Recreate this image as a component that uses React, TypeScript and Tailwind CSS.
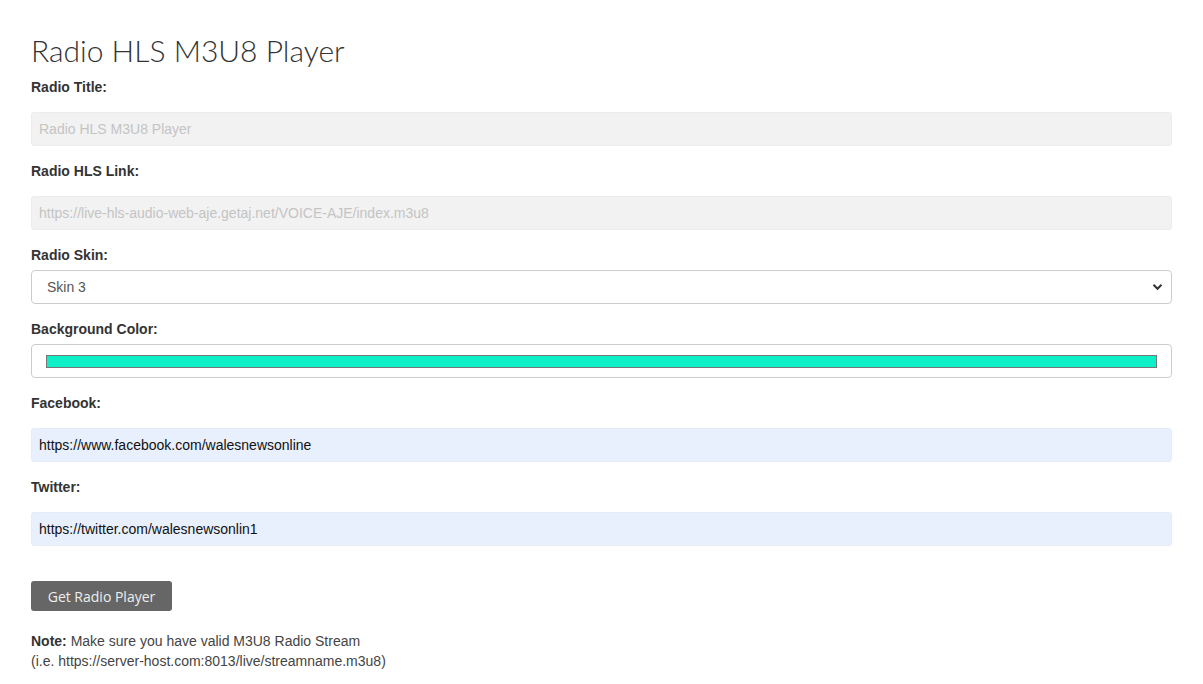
import React from "react";

const labelCls =
  "block text-[14px] leading-[18px] font-bold text-[#333] [font-family:'Liberation_Sans',Arial,sans-serif]";
const sans = "[font-family:'Liberation_Sans',Arial,sans-serif]";

export default function App() {
  return (
    <div className={`min-h-[684px] bg-white ${sans}`}>
      <div className="mx-[31px] pt-[30px]">
        <h1 className="text-[30px] leading-[40px] font-light text-[#333] [font-family:Lato,'Open_Sans',sans-serif]">
          Radio HLS M3U8 Player
        </h1>

        <label className={`${labelCls} mt-[8px]`}>Radio Title:</label>
        <div className="mt-[16px] h-[34px] rounded-[3px] border border-[#ececec] bg-[#f2f2f2] px-[7px] flex items-center text-[14px] text-[#c4c4c4]">
          Radio HLS M3U8 Player
        </div>

        <label className={`${labelCls} mt-[16px]`}>Radio HLS Link:</label>
        <div className="mt-[16px] h-[34px] rounded-[3px] border border-[#ececec] bg-[#f2f2f2] px-[7px] flex items-center text-[14px] text-[#c4c4c4]">
          https://live-hls-audio-web-aje.getaj.net/VOICE-AJE/index.m3u8
        </div>

        <label className={`${labelCls} mt-[16px]`}>Radio Skin:</label>
        <div className="mt-[6px] h-[34px] rounded-[4px] border border-[#cccccc] bg-white pl-[15px] pr-[8px] flex items-center justify-between text-[14px] text-[#555]">
          <span>Skin 3</span>
          <svg width="11" height="8" viewBox="0 0 11 8">
            <path d="M1.5 1.8 L5.5 5.8 L9.5 1.8" fill="none" stroke="#333" strokeWidth="2" />
          </svg>
        </div>

        <label className={`${labelCls} mt-[16px]`}>Background Color:</label>
        <div className="mt-[6px] h-[34px] rounded-[4px] border border-[#cccccc] bg-white px-[14px] flex items-center">
          <div className="h-[13px] w-full border border-[#767676] bg-[#0cefc7]" />
        </div>

        <label className={`${labelCls} mt-[16px]`}>Facebook:</label>
        <div className="mt-[16px] h-[34px] rounded-[3px] border border-[#e6ecf6] bg-[#e8f0fe] px-[7px] flex items-center text-[14px] text-[#111]">
          https://www.facebook.com/walesnewsonline
        </div>

        <label className={`${labelCls} mt-[16px]`}>Twitter:</label>
        <div className="mt-[16px] h-[34px] rounded-[3px] border border-[#e6ecf6] bg-[#e8f0fe] px-[7px] flex items-center text-[14px] text-[#111]">
          https://twitter.com/walesnewsonlin1
        </div>

        <button className="mt-[35px] h-[30px] w-[141px] rounded-[3px] bg-[#666666] text-[14px] text-[#eeeeee] [font-family:'Open_Sans',Lato,sans-serif] flex items-center justify-center">
          Get Radio Player
        </button>

        <p className="mt-[20px] text-[14px] leading-[20px] text-[#444]">
          <b className="text-[#333]">Note:</b> Make sure you have valid M3U8 Radio Stream
          <br />
          (i.e. https://server-host.com:8013/live/streamname.m3u8)
        </p>
      </div>
    </div>
  );
}
